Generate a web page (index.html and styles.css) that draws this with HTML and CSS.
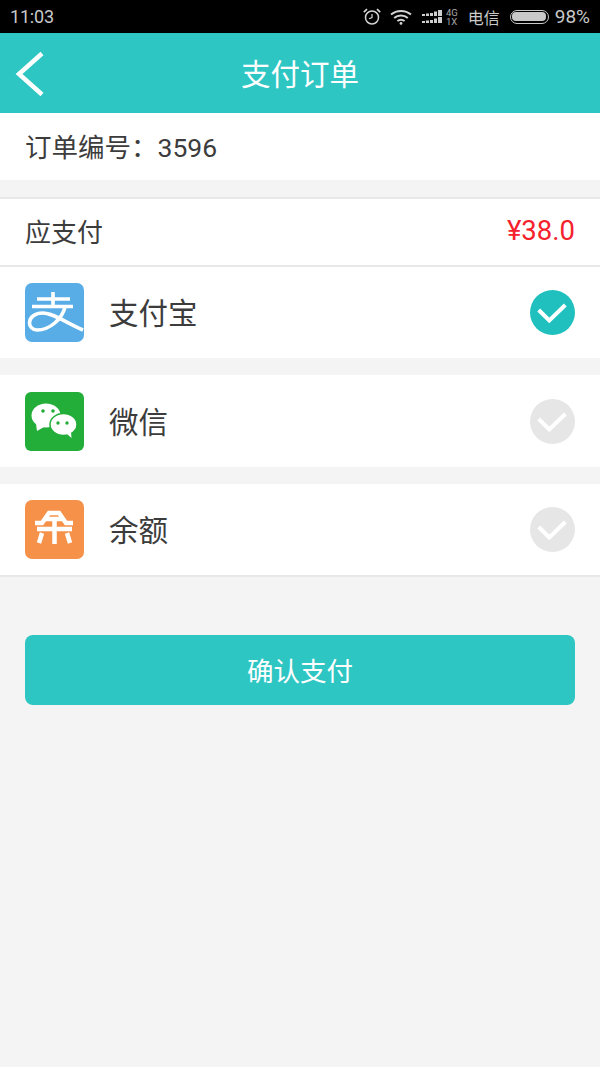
FILE: index.html
```html
<!DOCTYPE html>
<html lang="zh-CN">
<head>
  <meta charset="UTF-8" />
  <meta name="viewport" content="width=device-width, initial-scale=1.0"/>
  <title>支付订单</title>
  <link rel="stylesheet" href="styles.css">
</head>
<body>
  <div class="statusbar">
    <span class="time">11:03</span>
    <div class="status-right">
      <svg class="alarm" width="20" height="20" viewBox="0 0 20 20" fill="none" stroke="#d4d4d4">
        <circle cx="10" cy="10.500" r="6.500" stroke-width="1.500"/>
        <path d="M10 7v3.600l-3 1.200" stroke-width="1.200"/>
        <path d="M1.800 5.200 5 2.200M18.200 5.200 15 2.200" stroke-width="1.700"/>
      </svg>
      <svg class="wifi" width="22" height="16" viewBox="0 0 22 16" fill="none" stroke="#d4d4d4" stroke-width="2">
        <path d="M1 5.600c5.600-4.800 14.400-4.800 20 0"/>
        <path d="M4.200 9c3.800-3.200 9.800-3.200 13.600 0"/>
        <path d="M7.400 12c2-1.500 5.200-1.500 7.200 0"/>
        <circle cx="11" cy="14.400" r="1.400" fill="#d4d4d4" stroke="none"/>
      </svg>
      <svg class="signal" width="22" height="14" viewBox="0 0 22 14" fill="#cfcfcf">
        <rect x="0" y="4" width="3" height="2"/><rect x="4" y="3.500" width="3" height="2.500"/><rect x="8" y="3" width="3" height="3"/><rect x="12" y="1.500" width="3" height="4.500"/><rect x="16" y="0" width="4" height="6"/>
        <rect x="0" y="11" width="3" height="2"/><rect x="4" y="10.500" width="3" height="2.500"/><rect x="8" y="10" width="3" height="3"/><rect x="12" y="8.500" width="3" height="4.500"/><rect x="16" y="7" width="4" height="6"/>
      </svg>
      <span class="net"><span>4G</span><span>1X</span></span>
      <span class="carrier">电信</span>
      <span class="battery"><span class="battery-fill"></span></span>
      <span class="percent">98%</span>
    </div>
  </div>

  <div class="topbar">
    <svg class="back" width="30" height="46" viewBox="0 0 30 46" fill="none" stroke="#fff" stroke-width="4.500">
      <path d="M27 2.500 4 23l23 20.500"/>
    </svg>
    <h1>支付订单</h1>
  </div>

  <div class="order-no">订单编号：3596</div>

  <div class="amount">
    <span>应支付</span>
    <span class="price">¥38.0</span>
  </div>

  <div class="method method-first">
    <svg class="logo" width="59" height="59" viewBox="0 0 59 59">
      <rect width="59" height="59" rx="7" fill="#58ade6"/>
      <g fill="none" stroke="#fff" stroke-width="3.600">
        <path d="M12 16h33M7 23.500h41M28 9v14.500"/>
        <path d="M40 24c-3 12-15 23-28 23-5 0-7.500-4-7.500-7 0-6 6-10 13-10 11 0 24 10 40.500 17"/>
      </g>
    </svg>
    <span class="method-name">支付宝</span>
    <svg class="check" width="45" height="45" viewBox="0 0 45 45">
      <circle cx="22.500" cy="22.500" r="22.500" fill="#20c0bf"/>
      <path d="M8.700 20 19.300 30.500 35.300 15" fill="none" stroke="#fff" stroke-width="4"/>
    </svg>
  </div>

  <div class="method">
    <svg class="logo" width="59" height="59" viewBox="0 0 59 59">
      <rect width="59" height="59" rx="6" fill="#22ae39"/>
      <ellipse cx="21" cy="23.500" rx="14.500" ry="12" fill="#fff"/>
      <path d="M11 32l1 7 7-4z" fill="#fff"/>
      <ellipse cx="38.500" cy="32.500" rx="13.500" ry="11" fill="#fff" stroke="#22ae39" stroke-width="1.500"/>
      <path d="M42 42l4.500 4-.5-6z" fill="#fff"/>
      <circle cx="18" cy="19" r="1.800" fill="#22ae39"/><circle cx="28" cy="19" r="1.800" fill="#22ae39"/>
      <circle cx="33" cy="31" r="1.700" fill="#22ae39"/><circle cx="42" cy="31" r="1.700" fill="#22ae39"/>
    </svg>
    <span class="method-name">微信</span>
    <svg class="check" width="45" height="45" viewBox="0 0 45 45">
      <circle cx="22.500" cy="22.500" r="22.500" fill="#e6e6e6"/>
      <path d="M8.700 20 19.300 30.500 35.300 15" fill="none" stroke="#fff" stroke-width="4"/>
    </svg>
  </div>

  <div class="method method-last">
    <svg class="logo" width="59" height="59" viewBox="0 0 59 59">
      <rect width="59" height="59" rx="7" fill="#f6914a"/>
      <g fill="none" stroke="#fff" stroke-width="4.500">
        <path d="M10 23h7l7-10h10l7 10h7"/>
        <path d="M20 19h19M12 29h35M29.500 19v25"/>
        <path d="M17 33l-3 10M42 33l3 10"/>
      </g>
    </svg>
    <span class="method-name">余额</span>
    <svg class="check" width="45" height="45" viewBox="0 0 45 45">
      <circle cx="22.500" cy="22.500" r="22.500" fill="#e6e6e6"/>
      <path d="M8.700 20 19.300 30.500 35.300 15" fill="none" stroke="#fff" stroke-width="4"/>
    </svg>
  </div>

  <button class="pay-btn">确认支付</button>
</body>
</html>
```

FILE: styles.css
```css
* {
  box-sizing: border-box;
}

body {
  margin: 0;
  min-height: 1067px;
  background-color: #f4f4f4;
  font-family: "Roboto", "Noto Sans CJK SC", sans-serif;
  color: #3c3c3c;
}

.statusbar {
  height: 33px;
  background-color: #000;
  color: #c9c9c9;
  display: flex;
  align-items: center;
  justify-content: space-between;
  padding: 0 10px 0 10px;
}

.time {
  font-size: 18px;
  letter-spacing: -0.2px;
}

.status-right {
  display: flex;
  align-items: center;
}

.alarm {
  margin-right: 8px;
}

.wifi {
  margin-right: 10px;
}

.net {
  display: flex;
  flex-direction: column;
  font-size: 9.500px;
  line-height: 9px;
  margin: 0 10px 0 2px;
  color: #aaa;
}

.carrier {
  font-size: 16px;
  margin-right: 10px;
}

.battery {
  width: 39px;
  height: 14px;
  border: 1.500px solid #c9c9c9;
  border-radius: 7px;
  padding: 1.500px;
  margin-right: 6px;
}

.battery-fill {
  display: block;
  height: 100%;
  background-color: #c9c9c9;
  border-radius: 4px;
}

.percent {
  font-size: 19px;
}

.topbar {
  height: 80px;
  background-color: #2ec6c3;
  position: relative;
  display: flex;
  align-items: center;
  justify-content: center;
}

.topbar h1 {
  margin: 0 0 2px;
  font-size: 29.500px;
  font-weight: 400;
  color: #fff;
}

.back {
  position: absolute;
  left: 15px;
  top: 18px;
}

.order-no {
  height: 67px;
  background: #fff;
  padding: 0 25px 2px;
  display: flex;
  align-items: center;
  font-size: 26.500px;
  margin-bottom: 17px;
}

.amount {
  height: 70px;
  background: #fff;
  border-top: 2px solid #e8e8e8;
  border-bottom: 2px solid #e8e8e8;
  padding: 0 25px 3px 25px;
  display: flex;
  align-items: center;
  justify-content: space-between;
  font-size: 26px;
}

.price {
  color: #f5222d;
  font-size: 27.500px;
}

.method {
  height: 92px;
  background: #fff;
  padding: 0 25px;
  display: flex;
  align-items: center;
  margin-bottom: 17px;
}

.method-first {
  height: 91px;
}

.method-last {
  height: 93px;
  border-bottom: 2px solid #e8e8e8;
  margin-bottom: 0;
}

.method-name {
  flex: 1;
  font-size: 29.500px;
  margin-left: 25px;
  padding-bottom: 3px;
}

.pay-btn {
  display: block;
  width: 550px;
  height: 70px;
  margin: 58px 25px 0;
  padding-bottom: 3px;
  background-color: #2ec6c3;
  border: none;
  border-radius: 8px;
  color: #fff;
  font-family: inherit;
  font-size: 26.500px;
}
```
